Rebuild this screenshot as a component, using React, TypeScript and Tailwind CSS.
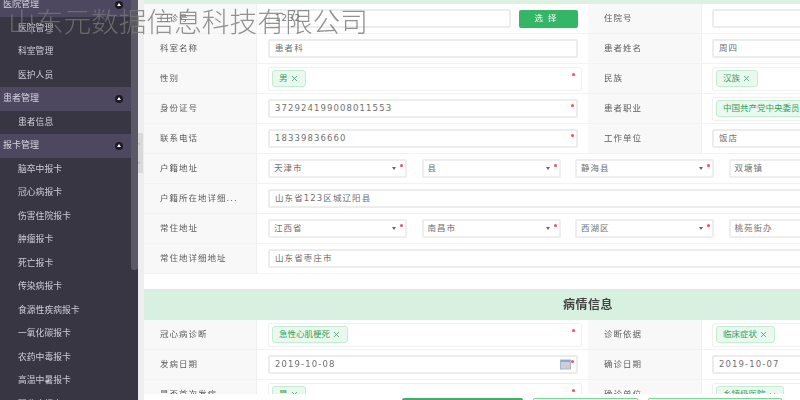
import { ReactNode } from 'react';
import { X, ChevronDown } from 'lucide-react';

const font = { fontFamily: '"DejaVu Sans", "Noto Sans CJK SC", sans-serif' };

const menu = [
  { title: '医院管理', items: ['医院管理', '科室管理', '医护人员'] },
  { title: '患者管理', items: ['患者信息'] },
  {
    title: '报卡管理',
    items: [
      '脑卒中报卡',
      '冠心病报卡',
      '伤害住院报卡',
      '肿瘤报卡',
      '死亡报卡',
      '传染病报卡',
      '食源性疾病报卡',
      '一氧化碳报卡',
      '农药中毒报卡',
      '高温中暑报卡',
      '职业病报卡',
    ],
  },
];

function Sidebar() {
  return (
    <aside className="relative w-[138px] h-full shrink-0 overflow-hidden bg-[#393643]">
      <div className="-mt-[7px] w-[131px]">
        {menu.map(group => (
          <div key={group.title}>
            <div className="h-[23.5px] flex items-center justify-between pl-[3px] pr-[8px] bg-[#4d4860] text-[9px] text-[#d6d4e0]">
              {group.title}
              <span className="w-[8px] h-[8px] rounded-full bg-[#1d1b22] flex items-center justify-center">
                <span className="border-x-[2px] border-b-[3px] border-x-transparent border-b-white" />
              </span>
            </div>
            {group.items.map(item => (
              <div key={item} className="h-[23.5px] flex items-center pl-[18px] text-[8.8px] text-[#cfcdd8]">
                {item}
              </div>
            ))}
          </div>
        ))}
      </div>
      <div className="absolute top-0 left-[131px] w-[7px] h-[270px] rounded-b-[3px] bg-[#5b5966]" />
    </aside>
  );
}

function Star() {
  return <span className="absolute top-[3px] right-[2px] w-[3px] h-[3px] rounded-full bg-[#f4505a]" />;
}

function Label({ children }: { children: ReactNode }) {
  return (
    <div className="h-full flex items-center pl-[16px] bg-[#f8f8f8] border-r border-[#f0f0f0] text-[8.5px] tracking-[1px] text-[#5c5c5c] whitespace-nowrap">
      {children}
    </div>
  );
}

function Input({ value, star, className = 'w-[310px]' }: { value?: string; star?: boolean; className?: string }) {
  return (
    <div className={`relative h-[19px] shrink-0 flex items-center pl-[5px] bg-white border-2 border-[#ececec] rounded-[2px] text-[8.5px] tracking-[1.1px] text-[#707070] ${className}`}>
      {value}
      {star && <Star />}
    </div>
  );
}

function Select({ value, star }: { value: string; star?: boolean }) {
  return (
    <div className="relative w-[139px] h-[19px] shrink-0 flex items-center pl-[4px] bg-white border-2 border-[#eeeeee] rounded-[2px] text-[8.5px] tracking-[1px] text-[#707070]">
      {value}
      {star && (
        <>
          <span className="absolute right-[9px] top-[6px] border-x-[2px] border-t-[3px] border-x-transparent border-t-[#666]" />
          <Star />
        </>
      )}
    </div>
  );
}

function Tag({ text, chevron }: { text: string; chevron?: boolean }) {
  return (
    <span className="h-[17px] flex items-center gap-[2px] px-[6px] bg-[#eaf8ef] border border-[#c2efd1] rounded-[3px] text-[8.5px] text-[#2f9f60] whitespace-nowrap">
      {text}
      {chevron ? <ChevronDown size={9} strokeWidth={2} /> : <X size={9} strokeWidth={2} />}
    </span>
  );
}

function TagField({ text, chevron }: { text: string; chevron?: boolean }) {
  return (
    <div className="relative w-[314px] h-[24px] flex items-center pl-[3px] bg-white border border-[#f0f0f0] rounded-[2px]">
      <Tag text={text} chevron={chevron} />
      <span className="absolute top-[5px] right-[6px] w-[3px] h-[3px] rounded-full bg-[#f4505a]" />
    </div>
  );
}

function Value({ children, span, right }: { children: ReactNode; span?: boolean; right?: boolean }) {
  return (
    <div className={`h-full flex items-center gap-[14.5px] bg-white ${right ? 'pl-[10px]' : 'pl-[11px]'} ${span ? 'col-span-3' : ''}`}>
      {children}
    </div>
  );
}

function Row({ children }: { children: ReactNode }) {
  return (
    <div className="grid grid-cols-[113px_331px_114px_330px] items-center h-[30px] border-b border-[#f2f2f2]">
      {children}
    </div>
  );
}

function CalendarIcon() {
  return (
    <svg className="absolute right-[5px] top-[2px]" width="11" height="11" viewBox="0 0 11 11">
      <rect x="0.5" y="1" width="10" height="9" fill="#c3d1e2" stroke="#aab6c6" />
      <rect x="1" y="1" width="9" height="2" fill="#8fa8c8" />
      <rect x="6" y="6" width="3" height="3" fill="#e6c9a0" />
    </svg>
  );
}

export default function App() {
  return (
    <div className="relative flex w-[800px] h-[400px] overflow-hidden bg-white" style={font}>
      <div className="flex w-full h-full blur-[0.6px]">
        <Sidebar />
        <div className="relative w-[6px] h-full shrink-0 bg-[#eeeeee] mr-0">
          <div className="absolute top-[133px] left-0 w-[5px] h-[40px] bg-[#d9d9d9] flex flex-col justify-between py-[8px] text-[5px] leading-[5px] text-[#777]">
            <span>‹</span>
            <span>›</span>
          </div>
        </div>

        <main className="flex-1 min-w-0 h-full flex flex-col overflow-hidden">
          <div className="h-[394px] w-[888px] shrink-0 overflow-hidden">
            <div className="h-[4px] bg-[#dcf1e2]" />
            <Row>
              <Label>门诊号</Label>
              <Value>
                <Input value="1232" className="w-[243px]" />
                <button className="-ml-[7px] w-[59px] h-[18px] bg-[#35b566] rounded-[2px] text-[8.5px] tracking-[5px] text-white">选择</button>
              </Value>
              <Label>住院号</Label>
              <Value right><Input /></Value>
            </Row>
            <Row>
              <Label>科室名称</Label>
              <Value><Input value="患者科" /></Value>
              <Label>患者姓名</Label>
              <Value right><Input value="周四" /></Value>
            </Row>
            <Row>
              <Label>性别</Label>
              <Value><TagField text="男" /></Value>
              <Label>民族</Label>
              <Value right><TagField text="汉族" /></Value>
            </Row>
            <Row>
              <Label>身份证号</Label>
              <Value><Input value="372924199008011553" star /></Value>
              <Label>患者职业</Label>
              <Value right><TagField text="中国共产党中央委员会" /></Value>
            </Row>
            <Row>
              <Label>联系电话</Label>
              <Value><Input value="18339836660" star /></Value>
              <Label>工作单位</Label>
              <Value right><Input value="饭店" /></Value>
            </Row>
            <Row>
              <Label>户籍地址</Label>
              <Value span>
                <Select value="天津市" star />
                <Select value="县" star />
                <Select value="静海县" star />
                <Select value="双塘镇" />
              </Value>
            </Row>
            <Row>
              <Label>户籍所在地详细...</Label>
              <Value span><Input value="山东省123区城辽阳县" className="w-[752px]" /></Value>
            </Row>
            <Row>
              <Label>常住地址</Label>
              <Value span>
                <Select value="江西省" star />
                <Select value="南昌市" star />
                <Select value="西湖区" star />
                <Select value="桃苑街办" />
              </Value>
            </Row>
            <Row>
              <Label>常住地详细地址</Label>
              <Value span><Input value="山东省枣庄市" className="w-[752px]" /></Value>
            </Row>

            <div className="h-[15px]" />
            <div className="h-[31px] flex items-center justify-center bg-[#d8f0df] text-[12px] font-bold tracking-[0.5px] text-[#444]">
              病情信息
            </div>

            <Row>
              <Label>冠心病诊断</Label>
              <Value><TagField text="急性心肌梗死" /></Value>
              <Label>诊断依据</Label>
              <Value right><TagField text="临床症状" /></Value>
            </Row>
            <Row>
              <Label>发病日期</Label>
              <Value>
                <div className="relative w-[310px] h-[19px] flex items-center pl-[5px] border-2 border-[#ececec] rounded-[2px] text-[8.5px] tracking-[1.1px] text-[#707070]">
                  2019-10-08
                  <CalendarIcon />
                  <Star />
                </div>
              </Value>
              <Label>确诊日期</Label>
              <Value right><Input value="2019-10-07" /></Value>
            </Row>
            <Row>
              <Label>是否首次发病</Label>
              <Value><TagField text="是" /></Value>
              <Label>确诊单位</Label>
              <Value right><TagField text="乡镇级医院" chevron /></Value>
            </Row>
          </div>

          <div className="h-[6px] shrink-0 flex bg-white pt-[4px] pl-[258px] gap-[10px]">
            <div className="w-[121px] h-[4px] rounded-t-[2px] bg-[#35b566]" />
            <div className="w-[105px] h-[4px] rounded-t-[2px] border border-b-0 border-[#7fd49e]" />
            <div className="w-[134px] h-[4px] rounded-t-[2px] border border-b-0 border-[#7fd49e]" />
          </div>
        </main>
      </div>

      <div
        className="absolute top-[2px] left-[8px] text-[27.7px] leading-[36px] font-extralight text-[#777] opacity-80 whitespace-nowrap pointer-events-none"
        style={{ fontFamily: '"Noto Sans CJK SC", sans-serif' }}
      >
        山东元数据信息科技有限公司
      </div>
    </div>
  );
}
